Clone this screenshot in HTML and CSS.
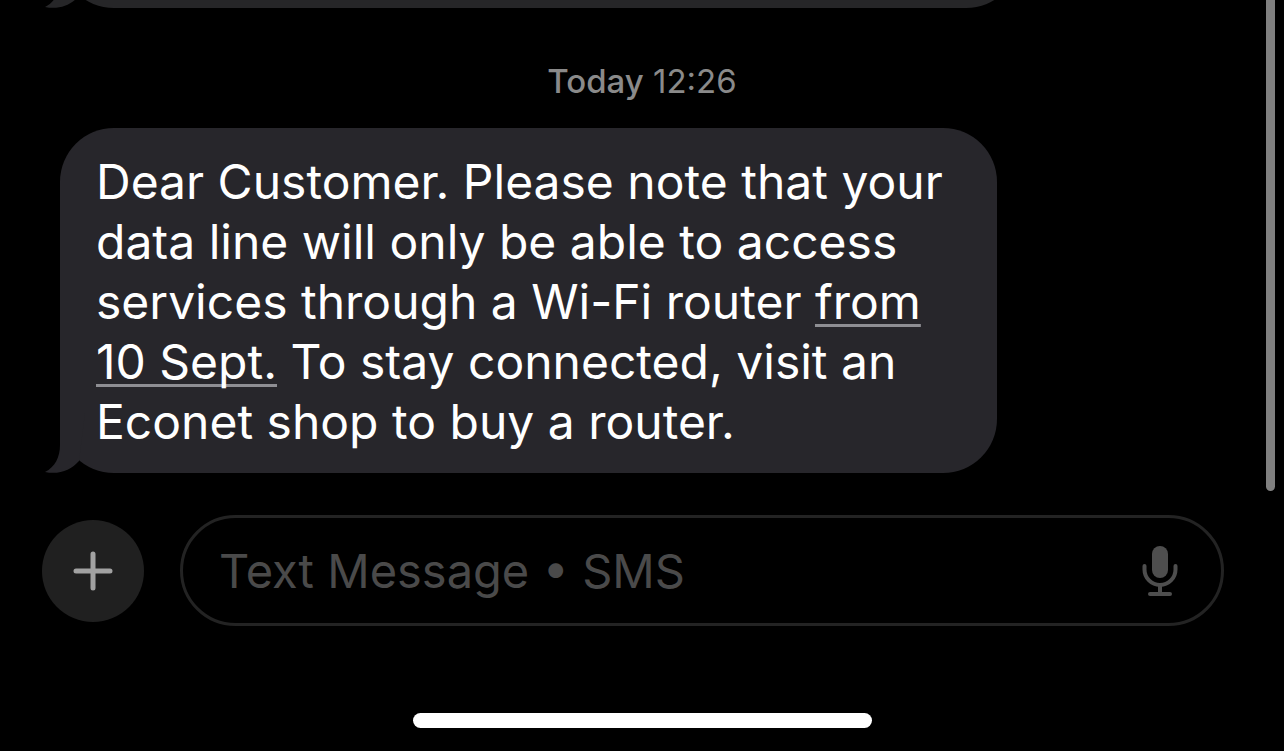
FILE: index.html
```html
<!DOCTYPE html>
<html lang="en">
  <head>
    <meta charset="UTF-8" />
    <meta name="viewport" content="width=device-width, initial-scale=1.0" />
    <title>Messages</title>
    <link rel="stylesheet" href="styles.css">
  </head>
  <body>
    <main class="thread">
      <div class="bubble bubble-previous">
        <svg class="tail" viewBox="0 0 40 60" aria-hidden="true">
          <path d="M15 0V32C15 44 10 54 0 59C14 62 26 57 34 48L40 0Z" />
        </svg>
      </div>

      <div class="timestamp"><strong>Today</strong> <time>12:26</time></div>

      <div class="bubble">
        <p>
          Dear Customer. Please note that your data line will only be able to
          access services through a Wi-Fi router <a href="#">from 10 Sept.</a>
          To stay connected, visit an Econet shop to buy a router.
        </p>
        <svg class="tail" viewBox="0 0 40 60" aria-hidden="true">
          <path d="M15 0V32C15 44 10 54 0 59C14 62 26 57 34 48L40 0Z" />
        </svg>
      </div>
    </main>

    <form class="composer">
      <button type="button" class="add-btn" aria-label="Add attachment">
        <svg viewBox="0 0 40 40" aria-hidden="true">
          <path d="M20 3V37M3 20H37" />
        </svg>
      </button>
      <div class="field">
        <input type="text" placeholder="Text Message • SMS" aria-label="Text message" />
        <button type="button" class="mic-btn" aria-label="Dictate">
          <svg viewBox="0 0 36 52" aria-hidden="true">
            <rect x="10" y="1" width="16" height="32" rx="8" />
            <path d="M2.5 21V24.500A15.500 15.500 0 0 0 33.500 24.500V21M18 40V49M8 49H28" />
          </svg>
        </button>
      </div>
    </form>

    <div class="home-indicator"></div>
    <div class="scrollbar"></div>
  </body>
</html>
```

FILE: styles.css
```css
* {
  margin: 0;
  padding: 0;
  box-sizing: border-box;
}

body {
  font-family: Inter, "Liberation Sans", sans-serif;
  background: #000;
  color: #fff;
  height: 100vh;
  display: flex;
  flex-direction: column;
  overflow: hidden;
  position: relative;
}

.thread {
  flex: 1;
  min-height: 0;
  display: flex;
  flex-direction: column;
  justify-content: flex-end;
  align-items: flex-start;
  padding: 0 60px 42px;
}

.bubble {
  position: relative;
  flex-shrink: 0;
  max-width: 937px;
  padding: 24px 36px 21px;
  background: #27262b;
  border-radius: 54px;
  font-size: 48px;
  line-height: 60px;
}

.bubble-previous {
  width: 100%;
  max-width: 960px;
  height: 165px;
  background: #262628;
}

.bubble a {
  color: inherit;
  text-decoration: underline;
  text-decoration-color: #8e8e93;
  text-decoration-thickness: 3px;
  text-decoration-skip-ink: none;
  text-underline-offset: 5px;
}

/* little hook at the bottom left of a received message */
.tail {
  position: absolute;
  left: -15px;
  bottom: 0;
  width: 40px;
  height: 60px;
  fill: #27262b;
}

.bubble-previous .tail {
  fill: #262628;
}

.timestamp {
  align-self: center;
  margin: 53px 0 27px;
  color: #8a8a8a;
  font-size: 33px;
  line-height: 40px;
}

.timestamp strong {
  font-weight: 500;
}

.composer {
  display: flex;
  align-items: center;
  gap: 36px;
  padding: 0 60px 0 42px;
}

.add-btn {
  flex-shrink: 0;
  width: 102px;
  height: 102px;
  display: flex;
  align-items: center;
  justify-content: center;
  background: #202020;
  border: none;
  border-radius: 50%;
  cursor: pointer;
}

.add-btn svg {
  width: 40px;
  height: 40px;
  fill: none;
  stroke: #a2a2a2;
  stroke-width: 5;
  stroke-linecap: round;
}

.field {
  flex: 1;
  display: flex;
  align-items: center;
  height: 111px;
  padding: 0 43px 0 36px;
  border: 3px solid #232323;
  border-radius: 56px;
}

.field input {
  flex: 1;
  min-width: 0;
  background: none;
  border: none;
  outline: none;
  color: #fff;
  font-family: inherit;
  font-size: 47px;
  line-height: 60px;
}

.field input::placeholder {
  color: #4a4a4a;
  opacity: 1;
}

.mic-btn {
  background: none;
  border: none;
  cursor: pointer;
}

.mic-btn svg {
  display: block;
  width: 36px;
  height: 52px;
  fill: none;
  stroke: #4e4e4e;
  stroke-width: 4;
  stroke-linecap: round;
}

.mic-btn rect {
  fill: #4e4e4e;
  stroke: none;
}

.home-indicator {
  align-self: center;
  width: 459px;
  height: 15px;
  margin: 87px 0 23px;
  background: #fff;
  border-radius: 8px;
}

.scrollbar {
  position: absolute;
  top: -20px;
  right: 9px;
  width: 9px;
  height: 511px;
  background: #808080;
  border-radius: 5px;
}
```
